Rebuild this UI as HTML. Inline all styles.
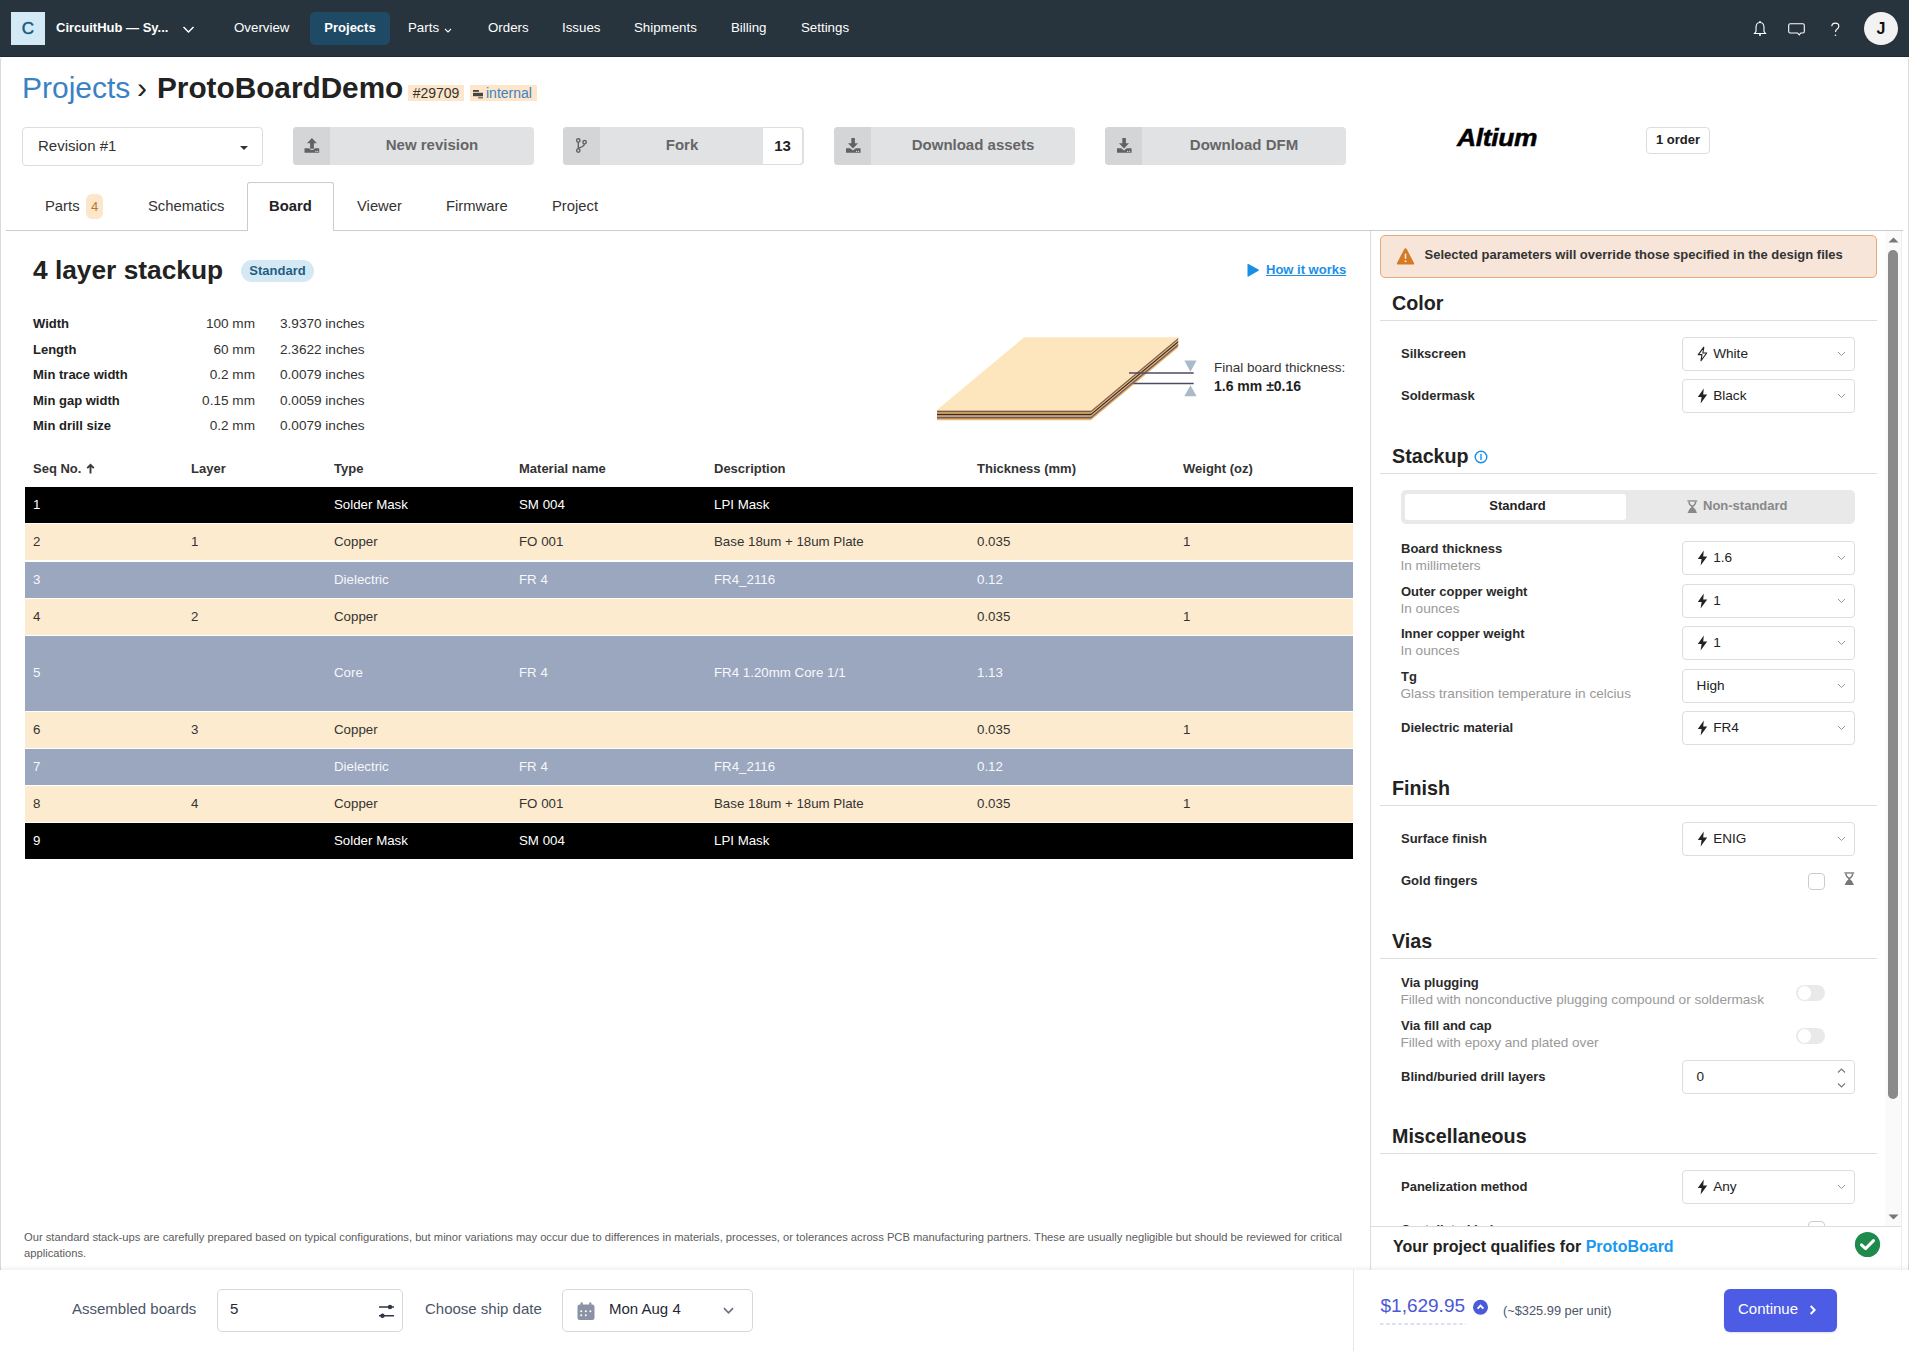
<!DOCTYPE html>
<html><head><meta charset="utf-8">
<style>
*{box-sizing:border-box;margin:0;padding:0}
html,body{width:1909px;height:1351px;overflow:hidden;background:#fff;font-family:"Liberation Sans",sans-serif;color:#222}
.a{position:absolute}
.nw{white-space:nowrap}
/* nav */
#nav{position:absolute;left:0;top:0;width:1909px;height:57px;background:#27343d}
#logo{left:11px;top:12px;width:34px;height:33px;background:#d3e9f5;color:#155a80;font-size:17px;text-align:center;line-height:33px;-webkit-text-stroke:0.5px #155a80}
.ni{top:0;height:56px;line-height:56px;color:#fff;font-size:13.3px}
#navact{left:310px;top:12px;width:80px;height:33px;border-radius:5px;background:#1f4a66;color:#fff;font-weight:bold;font-size:13px;text-align:center;line-height:31.5px}
/* page */
#page{position:absolute;left:0;top:56px;width:1909px;height:1295px;background:#fff}
.btn{position:absolute;top:127px;width:241px;height:38px;background:#e1e2e4;border-radius:4px;color:#666;font-weight:bold;font-size:15px;line-height:36px;overflow:hidden}
.btn .ic{position:absolute;left:0;top:0;width:37px;height:38px;background:#d4d5d7}
.btn .tx{position:absolute;left:37px;right:0;top:0;text-align:center}
.tab{position:absolute;top:183px;height:48px;line-height:46px;font-size:14.8px;color:#333}
.lbl{position:absolute;font-size:13px;font-weight:bold;color:#222}
.val{position:absolute;font-size:13.6px;color:#333}
.th{top:460px;font-size:13px;line-height:17px;font-weight:bold;color:#333}
.trw{left:25px;width:1328px}
.trw span{position:absolute;top:0;font-size:13.3px;white-space:nowrap}
.lbl{line-height:17px}.val{line-height:17px}

.rl{position:absolute;left:1401px;font-size:13px;line-height:17px;font-weight:bold;color:#2a2a2a}
.rs{position:absolute;left:1400.5px;font-size:13.6px;line-height:17px;color:#999}
.rh{position:absolute;left:1392px;font-size:19.7px;line-height:24px;font-weight:bold;color:#222}
.sel{position:absolute;left:1682px;width:173px;border:1px solid #ddd;border-radius:4px;background:#fff}
.sel span{position:absolute;top:0;font-size:13.6px;color:#222;white-space:nowrap}
.sel .bolt{position:absolute;left:14px;top:8px}
.sel .chev{position:absolute;left:153.5px;top:13px}
.tog{position:absolute;left:1796px;width:29px;height:16.5px;border-radius:8px;background:#e9e9e9}
.tog i{position:absolute;left:1.5px;top:1.5px;width:13.5px;height:13.5px;border-radius:50%;background:#fff}
</style></head><body>
<div id="nav">
  <div class="a" style="left:0;top:56px;width:1909px;height:1px;background:#1c2a33"></div>
  <div id="logo" class="a">C</div>
  <div class="a nw" style="left:56px;top:0;line-height:56px;color:#fff;font-weight:bold;font-size:13px">CircuitHub — Sy...</div>
  <svg class="a" style="left:182px;top:25px" width="13" height="9" viewBox="0 0 13 9"><path d="M1.5 2 L6.5 7 L11.5 2" stroke="#fff" stroke-width="1.5" fill="none"/></svg>
  <div class="a ni nw" style="left:234px">Overview</div>
  <div id="navact" class="a">Projects</div>
  <div class="a ni nw" style="left:408px">Parts</div>
  <svg class="a" style="left:443px;top:26px" width="10" height="8" viewBox="0 0 10 8"><path d="M2 3 L5 6 L8 3" stroke="#fff" stroke-width="1.1" fill="none"/></svg>
  <div class="a ni nw" style="left:488px">Orders</div>
  <div class="a ni nw" style="left:562px">Issues</div>
  <div class="a ni nw" style="left:634px">Shipments</div>
  <div class="a ni nw" style="left:731px">Billing</div>
  <div class="a ni nw" style="left:801px">Settings</div>
  <!-- icons -->
  <svg class="a" style="left:1752px;top:20px" width="16" height="17" viewBox="0 0 16 17"><path d="M8 2.5 C5 2.5 4 5 4 7.5 L4 11.5 L2.5 13.5 L13.5 13.5 L12 11.5 L12 7.5 C12 5 11 2.5 8 2.5 Z" stroke="#fff" stroke-width="1.1" fill="none"/><circle cx="8" cy="1.8" r="0.9" fill="#fff"/><circle cx="8" cy="15" r="1" fill="#fff"/></svg>
  <svg class="a" style="left:1787px;top:22px" width="19" height="17" viewBox="0 0 19 17"><path d="M3.2 1.8 H15.8 Q17.3 1.8 17.3 3.3 V9.5 Q17.3 11 15.8 11 H13.8 L12.2 12.8 L10.6 11 H3.2 Q1.7 11 1.7 9.5 V3.3 Q1.7 1.8 3.2 1.8 Z" stroke="#fff" stroke-width="1.1" fill="none"/></svg>
  <svg class="a" style="left:1830px;top:21.5px" width="11" height="15" viewBox="0 0 11 15"><path d="M1.8 4.3 Q1.8 1.2 5.3 1.2 Q8.8 1.2 8.8 4.2 Q8.8 5.8 7.2 6.9 Q5.5 8 5.5 10" stroke="#fff" stroke-width="1.2" fill="none"/><circle cx="5.5" cy="13.2" r="0.8" fill="#fff"/></svg>
  <div class="a" style="left:1864px;top:12px;width:34px;height:33px;border-radius:50%;background:#f2f2f2;color:#111;font-weight:bold;font-size:16px;text-align:center;line-height:33px">J</div>
</div>

<div id="content" class="a" style="left:0;top:0;width:1909px;height:1351px">
  <div class="a" style="left:0;top:57px;width:4px;height:1213px;border-left:1px solid #d9d9d9;border-top-left-radius:3px"></div>
  <div class="a" style="left:1905px;top:57px;width:4px;height:1213px;border-right:1px solid #d9d9d9;border-top-right-radius:3px"></div>
  <!-- header -->
  <div class="a nw" style="left:22px;top:70px;font-size:30px;line-height:36px;color:#3b82c4">Projects</div>
  <div class="a nw" style="left:137px;top:70px;font-size:30px;line-height:36px;color:#222">›</div>
  <div class="a nw" style="left:157px;top:70px;font-size:29.75px;line-height:36px;color:#222;font-weight:bold">ProtoBoardDemo</div>
  <div class="a nw" style="left:408px;top:85px;height:16px;width:56px;background:#fde6c9;font-size:14px;line-height:16px;color:#333;text-align:center">#29709</div>
  <div class="a nw" style="left:470px;top:85px;height:16px;width:67px;background:#fde6c9;font-size:14px;line-height:16px;color:#3b82c4;padding-left:16px">internal<svg class="a" style="left:3px;top:5px" width="11" height="10" viewBox="0 0 11 10"><rect x="0" y="0" width="6" height="1.8" fill="#444"/><rect x="0" y="2.8" width="10" height="3.4" fill="#444"/><rect x="5.2" y="6.8" width="4.8" height="1.7" fill="#777"/></svg></div>

  <!-- toolbar -->
  <div class="a" style="left:22px;top:127px;width:241px;height:39px;border:1px solid #ddd;border-radius:4px"></div>
  <div class="a nw" style="left:38px;top:126px;line-height:39px;font-size:15px;color:#333">Revision #1</div>
  <svg class="a" style="left:239px;top:144.5px" width="10" height="6" viewBox="0 0 10 6"><path d="M1 1 L5 5 L9 1 Z" fill="#333"/></svg>

  <div class="btn" style="left:293px"><div class="ic"><svg class="a" style="left:10px;top:9px" width="18" height="18" viewBox="0 0 18 18"><path d="M8.9 2 L13.9 7.3 L10.9 7.3 L10.9 12.7 L7.1 12.7 L7.1 7.3 L4 7.3 Z" fill="#616363"/><path d="M1.5 12.3 H6.2 Q6.8 13.9 9 13.9 Q11.2 13.9 11.8 12.3 H16 Q16.2 12.3 16.2 12.6 V16.5 Q16.2 16.8 15.8 16.8 H1.9 Q1.5 16.8 1.5 16.4 Z" fill="#616363"/><rect x="12.2" y="14.9" width="1.2" height="1" fill="#d6d7d9"/><rect x="14" y="14.9" width="1.2" height="1" fill="#d6d7d9"/></svg></div><div class="tx">New revision</div></div>
  <div class="btn" style="left:563px"><div class="ic"><svg class="a" style="left:10px;top:9px" width="18" height="18" viewBox="0 0 18 18"><g stroke="#616363" stroke-width="1.4" fill="none"><circle cx="5.3" cy="4.4" r="1.7"/><circle cx="11.6" cy="6.2" r="1.7"/><circle cx="5.3" cy="14.6" r="1.7"/><path d="M5.3 6.1 V12.9"/><path d="M11.4 7.9 Q11.2 10.2 8.8 10.9 Q6 11.6 5.5 12.8"/></g></svg></div><div class="tx" style="right:40px">Fork</div></div>
  <div class="a" style="left:763px;top:127px;width:40px;height:38px;background:#fff;border:1px solid #ddd;border-left:none;border-radius:0 4px 4px 0;font-weight:bold;font-size:15px;line-height:36px;text-align:center;color:#222">13</div>
  <div class="btn" style="left:834px"><div class="ic"><svg class="a" style="left:10px;top:9px" width="18" height="18" viewBox="0 0 18 18"><path d="M7.3 2 H10.9 V7.3 H14 L9 12.5 L4 7.3 H7.3 Z" fill="#616363"/><path d="M2 12.3 H6.2 L9 14.6 L11.8 12.3 H16.2 Q16.6 12.3 16.6 12.7 V16.4 Q16.6 16.8 16.2 16.8 H2.4 Q2 16.8 2 16.4 Z" fill="#616363"/><circle cx="12.6" cy="15.4" r="0.6" fill="#d6d7d9"/><circle cx="14.5" cy="15.4" r="0.6" fill="#d6d7d9"/></svg></div><div class="tx">Download assets</div></div>
  <div class="btn" style="left:1105px"><div class="ic"><svg class="a" style="left:10px;top:9px" width="18" height="18" viewBox="0 0 18 18"><path d="M7.3 2 H10.9 V7.3 H14 L9 12.5 L4 7.3 H7.3 Z" fill="#616363"/><path d="M2 12.3 H6.2 L9 14.6 L11.8 12.3 H16.2 Q16.6 12.3 16.6 12.7 V16.4 Q16.6 16.8 16.2 16.8 H2.4 Q2 16.8 2 16.4 Z" fill="#616363"/><circle cx="12.6" cy="15.4" r="0.6" fill="#d6d7d9"/><circle cx="14.5" cy="15.4" r="0.6" fill="#d6d7d9"/></svg></div><div class="tx">Download DFM</div></div>

  <div class="a nw" style="left:1456.5px;top:123.6px;font-size:24px;line-height:28px;font-weight:bold;font-style:italic;color:#000;letter-spacing:-0.3px;-webkit-text-stroke:0.5px #000;transform:scaleX(1.1);transform-origin:0 0">Altium</div>
  <div class="a nw" style="left:1646px;top:127px;width:64px;height:27px;border:1px solid #ddd;border-radius:4px;font-size:13px;font-weight:bold;text-align:center;line-height:24px;color:#222">1 order</div>

  <!-- tabs -->
  <div class="a" style="left:6px;top:230px;width:1897px;height:1px;background:#ccc"></div>
  <div class="a" style="left:247px;top:182px;width:87px;height:49px;border:1px solid #ccc;border-bottom:none;background:#fff;border-radius:3px 3px 0 0"></div>
  <div class="tab nw" style="left:45px">Parts</div>
  <div class="a" style="left:86px;top:194px;width:17px;height:25px;border-radius:6px;background:#fde6c9;color:#b07a3b;font-size:13px;line-height:25px;text-align:center">4</div>
  <div class="tab nw" style="left:148px">Schematics</div>
  <div class="tab nw" style="left:269px;font-weight:bold;color:#222">Board</div>
  <div class="tab nw" style="left:357px">Viewer</div>
  <div class="tab nw" style="left:446px">Firmware</div>
  <div class="tab nw" style="left:552px">Project</div>

  <!-- LEFT PANEL -->
  <div class="a nw" style="left:33px;top:254px;font-size:26.3px;line-height:32px;font-weight:bold;color:#222">4 layer stackup</div>
  <div class="a nw" style="left:241px;top:260px;width:73px;height:22px;border-radius:11px;background:#d5e9f5;color:#1f5f85;font-size:13px;font-weight:bold;line-height:22px;text-align:center">Standard</div>
  <svg class="a" style="left:1246px;top:263px" width="14" height="15" viewBox="0 0 14 15"><path d="M1.5 1.5 Q1.5 0.5 2.5 1 L12.5 6.6 Q13.3 7.2 12.5 7.8 L2.5 13.6 Q1.5 14.1 1.5 13 Z" fill="#1a8fe8"/></svg>
  <div class="a nw" style="left:1266px;top:261px;font-size:13px;line-height:18px;font-weight:bold;color:#1a8fe8;text-decoration:underline">How it works</div>

  <div class="lbl nw" style="left:33px;top:315px">Width</div>
  <div class="lbl nw" style="left:33px;top:341px">Length</div>
  <div class="lbl nw" style="left:33px;top:366px">Min trace width</div>
  <div class="lbl nw" style="left:33px;top:392px">Min gap width</div>
  <div class="lbl nw" style="left:33px;top:417px">Min drill size</div>
  <div class="val nw" style="right:1654px;top:315px">100 mm</div>
  <div class="val nw" style="right:1654px;top:341px">60 mm</div>
  <div class="val nw" style="right:1654px;top:366px">0.2 mm</div>
  <div class="val nw" style="right:1654px;top:392px">0.15 mm</div>
  <div class="val nw" style="right:1654px;top:417px">0.2 mm</div>
  <div class="val nw" style="left:280px;top:315px">3.9370 inches</div>
  <div class="val nw" style="left:280px;top:341px">2.3622 inches</div>
  <div class="val nw" style="left:280px;top:366px">0.0079 inches</div>
  <div class="val nw" style="left:280px;top:392px">0.0059 inches</div>
  <div class="val nw" style="left:280px;top:417px">0.0079 inches</div>

  <!-- board diagram -->
  <svg class="a" style="left:930px;top:330px" width="280" height="100" viewBox="930 330 280 100">
    <path d="M937 409.9 L1091 409.9 L1178.2 337.2 L1178.2 347.5 L1091 420.2 L937 420.2 Z" fill="#f2b660"/><path d="M937 410.9 L1091 410.9 L1178.2 338.2 L1178.2 339.6 L1091 412.3 L937 412.3 Z" fill="#5e5b7c"/><path d="M937 413.8 L1091 413.8 L1178.2 341.1 L1178.2 342.5 L1091 415.2 L937 415.2 Z" fill="#2e2c3a"/><path d="M937 416.8 L1091 416.8 L1178.2 344.1 L1178.2 345.7 L1091 418.4 L937 418.4 Z" fill="#5e5b7c"/>
    <path d="M1024.3 337.2 L1178.2 337.2 L1090.8 409.9 L936.9 409.9 Z" fill="#fde6bd"/>
    <path d="M1129 373 H1193.7 M1133.4 383.5 H1193.7" stroke="#4d4b63" stroke-width="1.6"/>
    <path d="M1184.3 360.6 H1196.6 L1190.45 371.7 Z M1184.3 396.3 H1196.6 L1190.45 385.2 Z" fill="#a9bacb"/>
  </svg>
  <div class="a nw" style="left:1214px;top:359px;font-size:13.5px;line-height:17px;color:#333">Final board thickness:</div>
  <div class="a nw" style="left:1214px;top:378px;font-size:14px;line-height:17px;color:#222;font-weight:bold">1.6 mm ±0.16</div>

  <!-- table -->
  <div class="a nw th" style="left:33px">Seq No.</div>
  <svg class="a" style="left:86.3px;top:463px" width="10" height="12" viewBox="0 0 10 12"><path d="M4.5 2 V10.5 M1.2 5.2 L4.5 1.9 L7.8 5.2" stroke="#3a3a3a" stroke-width="1.9" fill="none"/></svg>
  <div class="a nw th" style="left:191px">Layer</div>
  <div class="a nw th" style="left:334px">Type</div>
  <div class="a nw th" style="left:519px">Material name</div>
  <div class="a nw th" style="left:714px">Description</div>
  <div class="a nw th" style="left:977px">Thickness (mm)</div>
  <div class="a nw th" style="left:1183px">Weight (oz)</div>
  <div class="a trw" style="top:487px;height:36px;background:#000;color:#fff"><span style="left:8px;line-height:36px">1</span><span style="left:309px;line-height:36px">Solder Mask</span><span style="left:494px;line-height:36px">SM 004</span><span style="left:689px;line-height:36px">LPI Mask</span></div>
  <div class="a trw" style="top:524px;height:36px;background:#fdebcf;color:#333"><span style="left:8px;line-height:36px">2</span><span style="left:166px;line-height:36px">1</span><span style="left:309px;line-height:36px">Copper</span><span style="left:494px;line-height:36px">FO 001</span><span style="left:689px;line-height:36px">Base 18um + 18um Plate</span><span style="left:952px;line-height:36px">0.035</span><span style="left:1158px;line-height:36px">1</span></div>
  <div class="a trw" style="top:562px;height:36px;background:#9ba6bf;color:#f7f8fb"><span style="left:8px;line-height:36px">3</span><span style="left:309px;line-height:36px">Dielectric</span><span style="left:494px;line-height:36px">FR 4</span><span style="left:689px;line-height:36px">FR4_2116</span><span style="left:952px;line-height:36px">0.12</span></div>
  <div class="a trw" style="top:599px;height:35.5px;background:#fdebcf;color:#333"><span style="left:8px;line-height:35.5px">4</span><span style="left:166px;line-height:35.5px">2</span><span style="left:309px;line-height:35.5px">Copper</span><span style="left:952px;line-height:35.5px">0.035</span><span style="left:1158px;line-height:35.5px">1</span></div>
  <div class="a trw" style="top:636px;height:74.5px;background:#9ba6bf;color:#f7f8fb"><span style="left:8px;line-height:74.5px">5</span><span style="left:309px;line-height:74.5px">Core</span><span style="left:494px;line-height:74.5px">FR 4</span><span style="left:689px;line-height:74.5px">FR4 1.20mm Core 1/1</span><span style="left:952px;line-height:74.5px">1.13</span></div>
  <div class="a trw" style="top:712px;height:36px;background:#fdebcf;color:#333"><span style="left:8px;line-height:36px">6</span><span style="left:166px;line-height:36px">3</span><span style="left:309px;line-height:36px">Copper</span><span style="left:952px;line-height:36px">0.035</span><span style="left:1158px;line-height:36px">1</span></div>
  <div class="a trw" style="top:749px;height:35.5px;background:#9ba6bf;color:#f7f8fb"><span style="left:8px;line-height:35.5px">7</span><span style="left:309px;line-height:35.5px">Dielectric</span><span style="left:494px;line-height:35.5px">FR 4</span><span style="left:689px;line-height:35.5px">FR4_2116</span><span style="left:952px;line-height:35.5px">0.12</span></div>
  <div class="a trw" style="top:786px;height:35.5px;background:#fdebcf;color:#333"><span style="left:8px;line-height:36px">8</span><span style="left:166px;line-height:36px">4</span><span style="left:309px;line-height:36px">Copper</span><span style="left:494px;line-height:36px">FO 001</span><span style="left:689px;line-height:36px">Base 18um + 18um Plate</span><span style="left:952px;line-height:36px">0.035</span><span style="left:1158px;line-height:36px">1</span></div>
  <div class="a trw" style="top:823px;height:36px;background:#000;color:#fff"><span style="left:8px;line-height:35.5px">9</span><span style="left:309px;line-height:35.5px">Solder Mask</span><span style="left:494px;line-height:35.5px">SM 004</span><span style="left:689px;line-height:35.5px">LPI Mask</span></div>

  <div class="a" style="left:24px;top:1229px;width:1330px;font-size:11.2px;line-height:16px;color:#5c5c5c">Our standard stack-ups are carefully prepared based on typical configurations, but minor variations may occur due to differences in materials, processes, or tolerances across PCB manufacturing partners. These are usually negligible but should be reviewed for critical applications.</div>

  <!-- RIGHT PANEL -->
  <div class="a" style="left:1370px;top:231px;width:1px;height:1039px;background:#ddd"></div>
  <div class="a" style="left:1371px;top:231px;width:530px;height:995px;overflow:hidden">
   <div class="a" style="left:-1371px;top:-231px;width:1909px;height:1351px">
  <div class="a" style="left:1380px;top:235px;width:497px;height:43px;background:#f6e5d8;border:1px solid #e9a877;border-radius:5px"></div>
  <svg class="a" style="left:1396px;top:247px" width="19" height="19" viewBox="0 0 19 19"><path d="M9.5 1.3 Q10.3 1.3 10.8 2.2 L18 16 Q18.5 17.5 17 17.5 H2 Q0.5 17.5 1 16 L8.2 2.2 Q8.7 1.3 9.5 1.3 Z" fill="#d47a24"/><rect x="8.7" y="6.5" width="1.6" height="5.5" rx="0.8" fill="#f6e5d8"/><circle cx="9.5" cy="14.3" r="1" fill="#f6e5d8"/></svg>
  <div class="a nw" style="left:1424.5px;top:246px;font-size:13px;line-height:17px;font-weight:bold;color:#333">Selected parameters will override those specified in the design files</div>
<div class="rh nw" style="top:291.4px">Color</div><div class="a" style="left:1380px;top:320px;width:497px;height:1px;background:#ddd"></div><div class="rl nw" style="top:345.0px">Silkscreen</div><div class="sel" style="top:337px;height:34px"><svg class="bolt" width="11" height="16" viewBox="0 0 11 16"><path d="M6.8 1.2 L1.3 8.6 H5 L4 14.8 L9.7 7 H5.9 Z" fill="none" stroke="#222" stroke-width="1.1" stroke-linejoin="round"/></svg><span style="left:30.2px;line-height:32px">White</span><svg class="chev" width="9" height="6" viewBox="0 0 9 6"><path d="M1 1 L4.5 4.5 L8 1" stroke="#999" stroke-width="1" fill="none"/></svg></div><div class="rl nw" style="top:387.0px">Soldermask</div><div class="sel" style="top:379px;height:34px"><svg class="bolt" width="11" height="16" viewBox="0 0 11 16"><path d="M6.8 0.5 L0.8 9 H4.6 L3.6 15.5 L10.2 6.5 H6.2 Z" fill="#222"/></svg><span style="left:30.2px;line-height:32px">Black</span><svg class="chev" width="9" height="6" viewBox="0 0 9 6"><path d="M1 1 L4.5 4.5 L8 1" stroke="#999" stroke-width="1" fill="none"/></svg></div><div class="rh nw" style="top:443.9px">Stackup<svg class="a" style="left:82px;top:6px" width="14" height="14" viewBox="0 0 14 14"><circle cx="7" cy="7" r="5.8" stroke="#1a8fe8" stroke-width="1.4" fill="none"/><rect x="6.3" y="3.8" width="1.4" height="6.4" fill="#1a8fe8"/></svg></div><div class="a" style="left:1380px;top:473px;width:497px;height:1px;background:#ddd"></div><div class="a" style="left:1401px;top:490px;width:454px;height:34px;background:#e9e9e9;border-radius:5px"></div>
  <div class="a" style="left:1405px;top:494px;width:221px;height:26px;background:#fff;border-radius:3px;font-size:13px;font-weight:bold;line-height:24px;text-align:center;color:#222;padding-left:4px">Standard</div>
  <svg class="a" style="left:1687px;top:499.5px" width="11" height="14" viewBox="0 0 11 14"><path d="M0.4 0.3 H10.2 V1.6 H0.4 Z" fill="#888"/><path d="M1.9 1.5 Q1.9 4.6 5.3 6.6 Q8.7 4.6 8.7 1.5" stroke="#888" stroke-width="1.3" fill="none"/><path d="M5.3 6.4 Q2 8.6 0.6 12.9 H10 Q8.6 8.6 5.3 6.4 Z" fill="#888"/></svg>
  <div class="a nw" style="left:1703px;top:497px;font-size:13px;font-weight:bold;line-height:17px;color:#888">Non-standard</div>
<div class="rl nw" style="top:540.1px">Board thickness</div><div class="rs nw" style="top:556.8px">In millimeters</div><div class="sel" style="top:541px;height:34px"><svg class="bolt" width="11" height="16" viewBox="0 0 11 16"><path d="M6.8 0.5 L0.8 9 H4.6 L3.6 15.5 L10.2 6.5 H6.2 Z" fill="#222"/></svg><span style="left:30.2px;line-height:32px">1.6</span><svg class="chev" width="9" height="6" viewBox="0 0 9 6"><path d="M1 1 L4.5 4.5 L8 1" stroke="#999" stroke-width="1" fill="none"/></svg></div><div class="rl nw" style="top:582.7px">Outer copper weight</div><div class="rs nw" style="top:600.0px">In ounces</div><div class="sel" style="top:584px;height:34px"><svg class="bolt" width="11" height="16" viewBox="0 0 11 16"><path d="M6.8 0.5 L0.8 9 H4.6 L3.6 15.5 L10.2 6.5 H6.2 Z" fill="#222"/></svg><span style="left:30.2px;line-height:32px">1</span><svg class="chev" width="9" height="6" viewBox="0 0 9 6"><path d="M1 1 L4.5 4.5 L8 1" stroke="#999" stroke-width="1" fill="none"/></svg></div><div class="rl nw" style="top:624.5px">Inner copper weight</div><div class="rs nw" style="top:641.8px">In ounces</div><div class="sel" style="top:626px;height:34px"><svg class="bolt" width="11" height="16" viewBox="0 0 11 16"><path d="M6.8 0.5 L0.8 9 H4.6 L3.6 15.5 L10.2 6.5 H6.2 Z" fill="#222"/></svg><span style="left:30.2px;line-height:32px">1</span><svg class="chev" width="9" height="6" viewBox="0 0 9 6"><path d="M1 1 L4.5 4.5 L8 1" stroke="#999" stroke-width="1" fill="none"/></svg></div><div class="rl nw" style="top:668.0px">Tg</div><div class="rs nw" style="top:684.7px">Glass transition temperature in celcius</div><div class="sel" style="top:669px;height:34px"><span style="left:13.599999999999909px;line-height:32px">High</span><svg class="chev" width="9" height="6" viewBox="0 0 9 6"><path d="M1 1 L4.5 4.5 L8 1" stroke="#999" stroke-width="1" fill="none"/></svg></div><div class="rl nw" style="top:718.8px">Dielectric material</div><div class="sel" style="top:711px;height:34px"><svg class="bolt" width="11" height="16" viewBox="0 0 11 16"><path d="M6.8 0.5 L0.8 9 H4.6 L3.6 15.5 L10.2 6.5 H6.2 Z" fill="#222"/></svg><span style="left:30.2px;line-height:32px">FR4</span><svg class="chev" width="9" height="6" viewBox="0 0 9 6"><path d="M1 1 L4.5 4.5 L8 1" stroke="#999" stroke-width="1" fill="none"/></svg></div><div class="rh nw" style="top:776.4px">Finish</div><div class="a" style="left:1380px;top:805px;width:497px;height:1px;background:#ddd"></div><div class="rl nw" style="top:829.5px">Surface finish</div><div class="sel" style="top:822px;height:34px"><svg class="bolt" width="11" height="16" viewBox="0 0 11 16"><path d="M6.8 0.5 L0.8 9 H4.6 L3.6 15.5 L10.2 6.5 H6.2 Z" fill="#222"/></svg><span style="left:30.2px;line-height:32px">ENIG</span><svg class="chev" width="9" height="6" viewBox="0 0 9 6"><path d="M1 1 L4.5 4.5 L8 1" stroke="#999" stroke-width="1" fill="none"/></svg></div><div class="rl nw" style="top:872.2px">Gold fingers</div><div class="a" style="left:1808px;top:873px;width:17px;height:17px;border:1px solid #ccc;border-radius:4px;background:#fff"></div><svg class="a" style="left:1844px;top:872px" width="11" height="14" viewBox="0 0 11 14"><path d="M0.4 0.3 H10.2 V1.6 H0.4 Z" fill="#777"/><path d="M1.9 1.5 Q1.9 4.6 5.3 6.6 Q8.7 4.6 8.7 1.5" stroke="#777" stroke-width="1.3" fill="none"/><path d="M5.3 6.4 Q2 8.6 0.6 12.9 H10 Q8.6 8.6 5.3 6.4 Z" fill="#777"/></svg><div class="rh nw" style="top:928.9px">Vias</div><div class="a" style="left:1380px;top:958px;width:497px;height:1px;background:#ddd"></div><div class="rl nw" style="top:973.5px">Via plugging</div><div class="rs nw" style="top:990.8px">Filled with nonconductive plugging compound or soldermask</div><div class="tog" style="top:984.5px"><i></i></div><div class="rl nw" style="top:1016.5px">Via fill and cap</div><div class="rs nw" style="top:1033.7px">Filled with epoxy and plated over</div><div class="tog" style="top:1027.5px"><i></i></div><div class="rl nw" style="top:1067.6px">Blind/buried drill layers</div><div class="sel" style="top:1060px;height:34px"><span style="left:13.6px;line-height:32px">0</span><svg class="a" style="left:154px;top:7px" width="9" height="20" viewBox="0 0 9 20"><path d="M1 4.5 L4.5 1 L8 4.5 M1 15.5 L4.5 19 L8 15.5" stroke="#777" stroke-width="1.1" fill="none"/></svg></div><div class="rh nw" style="top:1124.4px">Miscellaneous</div><div class="a" style="left:1380px;top:1153px;width:497px;height:1px;background:#ddd"></div><div class="rl nw" style="top:1178.0px">Panelization method</div><div class="sel" style="top:1170px;height:34px"><svg class="bolt" width="11" height="16" viewBox="0 0 11 16"><path d="M6.8 0.5 L0.8 9 H4.6 L3.6 15.5 L10.2 6.5 H6.2 Z" fill="#222"/></svg><span style="left:30.2px;line-height:32px">Any</span><svg class="chev" width="9" height="6" viewBox="0 0 9 6"><path d="M1 1 L4.5 4.5 L8 1" stroke="#999" stroke-width="1" fill="none"/></svg></div><div class="rl nw" style="top:1221.2px">Castellated holes</div><div class="a" style="left:1808px;top:1221px;width:17px;height:17px;border:1px solid #ccc;border-radius:4px;background:#fff"></div>
   </div>
   <!-- scrollbar -->
   <div class="a" style="left:514px;top:0;width:17px;height:995px;background:#fafafa"></div>
   <svg class="a" style="left:517px;top:6px" width="11" height="6" viewBox="0 0 11 6"><path d="M0.5 5.5 L5.5 0.5 L10.5 5.5 Z" fill="#777"/></svg>
   <div class="a" style="left:517px;top:19px;width:10px;height:849px;border-radius:5px;background:#8a8a8a"></div>
   <svg class="a" style="left:517px;top:983px" width="11" height="6" viewBox="0 0 11 6"><path d="M0.5 0.5 L5.5 5.5 L10.5 0.5 Z" fill="#777"/></svg>
  </div>
  <div class="a" style="left:1371px;top:1226px;width:530px;height:1px;background:#ddd"></div>
  <div class="a" style="left:1901px;top:231px;width:1px;height:1039px;background:#eee"></div>
  <div class="a nw" style="left:1393px;top:1237.3px;font-size:16px;line-height:20px;font-weight:bold;color:#222">Your project qualifies for <span style="color:#1a98f0">ProtoBoard</span></div>
  <svg class="a" style="left:1854px;top:1231px" width="27" height="27" viewBox="0 0 27 27"><circle cx="13.5" cy="13.5" r="12.6" fill="#1e8a4c"/><path d="M7.5 13.8 L11.6 17.6 L19.5 9.6" stroke="#fff" stroke-width="3" fill="none" stroke-linecap="round" stroke-linejoin="round"/></svg>

  <!-- BOTTOM BAR -->
  <div class="a" style="left:0;top:1265px;width:1909px;height:5px;background:linear-gradient(to bottom,rgba(0,0,0,0),rgba(0,0,0,0.05))"></div>
  <div class="a" style="left:0;top:1270px;width:1909px;height:81px;background:#fff"></div>
  <div class="a" style="left:1353px;top:1270px;width:1px;height:81px;background:#e6e6e6"></div>
  <div class="a nw" style="left:72px;top:1300px;font-size:15px;line-height:18px;color:#4a5568">Assembled boards</div>
  <div class="a" style="left:217px;top:1289px;width:186px;height:43px;border:1px solid #d5d8dc;border-radius:5px"></div>
  <div class="a nw" style="left:230px;top:1300px;font-size:15px;line-height:18px;color:#1f2937">5</div>
  <svg class="a" style="left:378px;top:1302px" width="17" height="18" viewBox="0 0 17 18"><path d="M1 5 H16 M1 13.8 H16" stroke="#2d3748" stroke-width="1.6"/><circle cx="12" cy="5" r="2.2" fill="#2d3748"/><circle cx="4.5" cy="13.8" r="2.2" fill="#2d3748"/></svg>
  <div class="a nw" style="left:425px;top:1300px;font-size:15px;line-height:18px;color:#4a5568">Choose ship date</div>
  <div class="a" style="left:562px;top:1289px;width:191px;height:43px;border:1px solid #d5d8dc;border-radius:5px"></div>
  <svg class="a" style="left:576.5px;top:1301.5px" width="18" height="18" viewBox="0 0 18 18"><rect x="0.5" y="2.5" width="17" height="15.5" rx="2.2" fill="#8a92a6"/><rect x="3.6" y="0.3" width="2.2" height="4.2" rx="1.1" fill="#8a92a6"/><rect x="12.2" y="0.3" width="2.2" height="4.2" rx="1.1" fill="#8a92a6"/><circle cx="4.2" cy="9.2" r="1" fill="#fff"/><circle cx="8.8" cy="9.2" r="1" fill="#fff"/><circle cx="13.4" cy="9.2" r="1" fill="#fff"/><circle cx="4.2" cy="13.3" r="1" fill="#fff"/><circle cx="8.8" cy="13.3" r="1" fill="#fff"/></svg>
  <div class="a nw" style="left:609px;top:1300px;font-size:15px;line-height:18px;color:#1f2937">Mon Aug 4</div>
  <svg class="a" style="left:722px;top:1306px" width="13" height="9" viewBox="0 0 13 9"><path d="M2 2.2 L6.5 6.8 L11 2.2" stroke="#6b7280" stroke-width="1.7" fill="none"/></svg>

  <div class="a nw" style="left:1380.5px;top:1295.3px;font-size:19px;line-height:22px;color:#4b58d6">$1,629.95</div>
  <svg class="a" style="left:1380px;top:1322.5px" width="86" height="2" viewBox="0 0 86 2"><path d="M0 1 H86" stroke="#b9bef0" stroke-width="1" stroke-dasharray="3.5 2.6"/></svg>
  <svg class="a" style="left:1472px;top:1298.5px" width="17" height="17" viewBox="0 0 17 17"><circle cx="8.5" cy="8.3" r="7.5" fill="#4b5ad8"/><path d="M5.6 9.6 L8.5 6.7 L11.4 9.6" stroke="#fff" stroke-width="1.9" fill="none"/></svg>
  <div class="a nw" style="left:1503px;top:1302px;font-size:12.8px;line-height:17px;color:#4a5568">(~$325.99 per unit)</div>
  <div class="a" style="left:1724px;top:1289px;width:113px;height:43px;background:#4c5ce4;border-radius:6px;box-shadow:0 1px 2px rgba(0,0,0,0.12)"></div>
  <div class="a nw" style="left:1738px;top:1300px;font-size:15px;line-height:18px;color:#fff">Continue</div>
  <svg class="a" style="left:1808px;top:1303px" width="10" height="14" viewBox="0 0 10 14"><path d="M2.7 3 L6.6 7 L2.7 11" stroke="#fff" stroke-width="2" fill="none"/></svg>
</div>
</body></html>
